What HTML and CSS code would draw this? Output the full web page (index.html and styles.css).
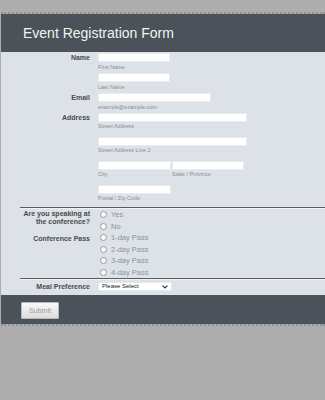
FILE: index.html
```html
<!DOCTYPE html>
<html>
<head>
<meta charset="utf-8">
<link rel="stylesheet" href="styles.css">
</head>
<body>
<div class="form">
  <div class="header"><h1 class="title">Event Registration Form</h1></div>
  <div class="content">
    <div class="row">
      <div class="lbl">Name</div>
      <div class="fields">
        <div class="sub"><input class="inp w72"><span class="sl">First Name</span></div>
        <div class="sub"><input class="inp w72"><span class="sl">Last Name</span></div>
      </div>
    </div>
    <div class="row">
      <div class="lbl">Email</div>
      <div class="fields">
        <div class="sub"><input class="inp w113"><span class="sl">example@example.com</span></div>
      </div>
    </div>
    <div class="row">
      <div class="lbl">Address</div>
      <div class="fields addr">
        <div class="asub"><input class="inp w149"><span class="sl">Street Address</span></div>
        <div class="asub"><input class="inp w149"><span class="sl">Street Address Line 2</span></div>
        <div class="pair">
          <div class="asub"><input class="inp w73"><span class="sl">City</span></div>
          <div class="asub"><input class="inp w72"><span class="sl">State / Province</span></div>
        </div>
        <div class="asub last"><input class="inp w73"><span class="sl">Postal / Zip Code</span></div>
      </div>
    </div>
    <div class="divider"></div>
    <div class="row rrow">
      <div class="lbl two">Are you speaking at<br>the conference?</div>
      <div class="opts">
        <div class="opt"><span class="radio"></span>Yes</div>
        <div class="opt"><span class="radio"></span>No</div>
      </div>
    </div>
    <div class="row rrow">
      <div class="lbl rl">Conference Pass</div>
      <div class="opts">
        <div class="opt"><span class="radio"></span>1-day Pass</div>
        <div class="opt"><span class="radio"></span>2-day Pass</div>
        <div class="opt"><span class="radio"></span>3-day Pass</div>
        <div class="opt"><span class="radio"></span>4-day Pass</div>
      </div>
    </div>
    <div class="divider"></div>
    <div class="row meal">
      <div class="lbl">Meal Preference</div>
      <div class="selwrap">
        <select class="sel"><option>Please Select</option></select>
        <svg class="chev" width="6" height="4" viewBox="0 0 6 4"><path d="M0.6 0.6 L3 3 L5.4 0.6" fill="none" stroke="#333" stroke-width="1.2"/></svg>
      </div>
    </div>
  </div>
  <div class="footer"><button class="submit">Submit</button></div>
</div>
</body>
</html>
```
FILE: styles.css
```css
html, body {
  margin: 0;
  padding: 0;
  background: #adadad;
  overflow: hidden;
  font-family: "Liberation Sans", Arial, sans-serif;
}
.form {
  margin: 12px 0 0 1px;
  border-top: 2px dotted #939393;
  border-bottom: 2px dotted #939393;
}
.header {
  background: #4b5259;
  height: 38px;
  display: flex;
  align-items: center;
  padding-left: 22px;
}
.title {
  margin: 0;
  font-weight: normal;
  font-size: 14px;
  color: #f2f2f2;
  line-height: 16px;
  padding-bottom: 1px;
}
.content {
  background: #dce2e8;
  padding: 1px 0 4px 0;
}
.row {
  display: flex;
  gap: 8px;
  align-items: flex-start;
}
.lbl {
  width: 89px;
  flex: none;
  text-align: right;
  font-size: 7px;
  font-weight: bold;
  color: #4a4a4a;
  line-height: 9px;
}
.fields { display: flex; flex-direction: column; }
.sub { display: flex; flex-direction: column; margin-bottom: 1px; }
.asub { display: flex; flex-direction: column; margin-bottom: 7px; }
.asub.last { margin-bottom: 5px; }
.pair { display: flex; gap: 1px; }
.inp {
  box-sizing: border-box;
  height: 9px;
  padding: 0;
  margin: 0;
  border: 1px solid #e9ecef;
  background: #fff;
  display: block;
}
.w72 { width: 72px; }
.w73 { width: 73px; }
.w113 { width: 113px; }
.w149 { width: 149px; }
.sl {
  font-size: 5.5px;
  line-height: 10px;
  color: #8a8d90;
}
.addr .sl { line-height: 8px; }
.divider {
  margin-left: 19px;
  border-top: 1px solid #5c5c5c;
  border-bottom: 1px solid #f0f2f4;
}
.opts { display: flex; flex-direction: column; }
.opt {
  display: flex;
  align-items: center;
  height: 11.5px;
  font-size: 7.5px;
  color: #8e9296;
  padding-left: 2px;
}
.radio {
  width: 7px;
  height: 7px;
  box-sizing: border-box;
  border: 1px solid #9a9a9a;
  border-radius: 50%;
  background: #fbfbfb;
  margin-right: 4px;
  flex: none;
}
.lbl.two { line-height: 8.5px; padding-top: 0.5px; }
.lbl.rl { line-height: 11.5px; padding-top: 1px; }
.meal { padding-top: 2px; }
.selwrap { position: relative; }
.sel {
  appearance: none;
  -webkit-appearance: none;
  box-sizing: border-box;
  width: 74px;
  height: 9px;
  margin: 0;
  padding: 0 0 0 3px;
  border: 1px solid #e6e9ec;
  background: #fff;
  font-family: "Liberation Sans", Arial, sans-serif;
  font-size: 6px;
  line-height: 7px;
  color: #222;
  display: block;
}
.chev {
  position: absolute;
  right: 4px;
  top: 2.5px;
}
.footer {
  background: #4b5259;
  height: 29px;
  padding: 7px 0 0 20px;
  box-sizing: border-box;
}
.submit {
  box-sizing: border-box;
  width: 38px;
  height: 17px;
  padding: 0;
  border: 1px solid #b9b9b9;
  border-radius: 1px;
  background: linear-gradient(#fafafa, #dcdcdc);
  font-family: "Liberation Sans", Arial, sans-serif;
  font-size: 7px;
  color: #9a9a9a;
  display: block;
}
```
